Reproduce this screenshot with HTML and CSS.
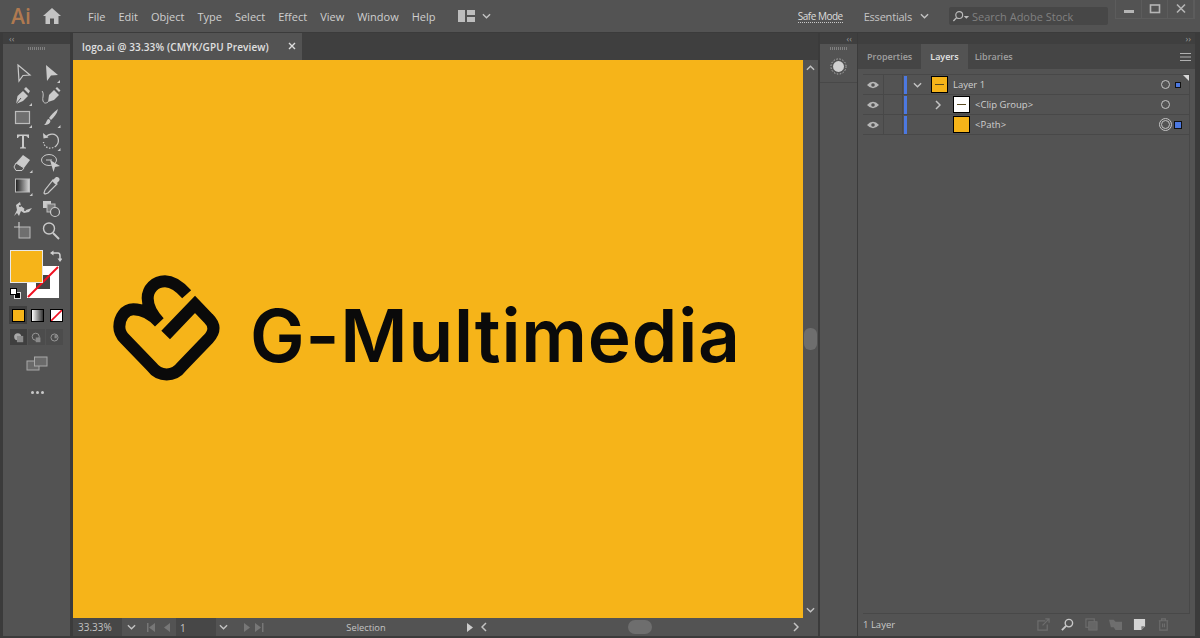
FILE: index.html
```html
<!DOCTYPE html>
<html lang="en">
<head>
  <meta charset="UTF-8" />
  <title>logo.ai @ 33.33% (CMYK/GPU Preview)</title>
  <link rel="stylesheet" href="styles.css">
</head>
<body>

  <header class="menubar">
    <span class="app-logo">Ai</span>
    <svg class="home-icon" viewBox="0 0 18 16"><path d="M9 0 L18 8 L15.5 8 L15.5 16 L11 16 L11 10.5 L7 10.5 L7 16 L2.5 16 L2.5 8 L0 8 Z" fill="#c4c4c4"/></svg>
    <nav class="menu">
      <span>File</span><span>Edit</span><span>Object</span><span>Type</span><span>Select</span><span>Effect</span><span>View</span><span>Window</span><span>Help</span>
    </nav>
    <svg class="arrange-icon" viewBox="0 0 17 12"><path d="M0 0H7V12H0ZM9 0H17V5H9ZM9 7H17V12H9Z" fill="#bdbdbd"/></svg>
    <svg class="chev chev-arrange" viewBox="0 0 10 6"><path d="M1 1 L5 5 L9 1" /></svg>
    <span class="spacer"></span>
    <span class="safe-mode">Safe Mode</span>
    <span class="essentials">Essentials</span>
    <svg class="chev chev-ess" viewBox="0 0 10 6"><path d="M1 1 L5 5 L9 1" /></svg>
    <div class="search">
      <svg viewBox="0 0 20 12" class="search-icon"><circle cx="8" cy="5" r="3.8" fill="none" stroke="#bbb" stroke-width="1.3"/><path d="M5 8 L1.5 11.5" stroke="#bbb" stroke-width="1.5"/><path d="M13 6H19L16 9Z" fill="#bbb"/></svg>
      <span>Search Adobe Stock</span>
    </div>
    <div class="win-btns">
      <span class="win-btn"><svg viewBox="0 0 12 12"><rect x="1" y="7" width="10" height="3" fill="#b5b5b5"/></svg></span>
      <span class="win-btn"><svg viewBox="0 0 12 12"><rect x="1.5" y="2" width="9" height="7.5" fill="none" stroke="#b5b5b5" stroke-width="1.6"/></svg></span>
      <span class="win-btn"><svg viewBox="0 0 12 12"><path d="M2 1.5 L10 9.5 M10 1.5 L2 9.5" stroke="#b5b5b5" stroke-width="1.6"/></svg></span>
    </div>
  </header>

  <div class="workspace">

    <aside class="toolbar">
      <div class="strip"><span class="arrows">‹‹</span></div>
      <div class="grip"></div>
      <div class="tools">
        <svg viewBox="0 0 22 22"><path d="M6 3 L18 13 L11 13.5 L7 19 Z" fill="none" stroke="#c8c8c8" stroke-width="1.2"/></svg>
        <svg viewBox="0 0 22 22"><path d="M6 3 L18 13 L11 13.5 L7 19 Z" fill="#cacaca"/><path d="M20 18V21H17Z" fill="#c8c8c8"/></svg>
        <svg viewBox="0 0 22 22"><path d="M4 19 L5.5 11 L11 6 L16 11 L11 16 Z" fill="#cacaca"/><path d="M12 4 L14 2 L18 6 L16.5 8.500Z" fill="#cacaca"/><path d="M4 19 L9 13" stroke="#555" stroke-width="1"/><path d="M20 18V21H17Z" fill="#c8c8c8"/></svg>
        <svg viewBox="0 0 22 22"><path d="M8 17 L9 10 L14 5 L19 10 L14 15 Z" fill="#cacaca"/><path d="M15.500 3.500 L17 2 L20.500 5.500 L19 7Z" fill="#cacaca"/><path d="M8 17 C4 20 2 16 3 12 C3.500 9 3 7 2 6" fill="none" stroke="#c8c8c8" stroke-width="1"/></svg>
        <svg viewBox="0 0 22 22"><rect x="3.500" y="4.500" width="14" height="12" fill="#6f6f6f" stroke="#bcbcbc" stroke-width="1.200"/><path d="M20 18V21H17Z" fill="#c8c8c8"/></svg>
        <svg viewBox="0 0 22 22"><path d="M18 2 C17 7 14 10 11 13 L9 11 C11 8 14 5 18 2Z" fill="#cacaca"/><path d="M8 12 C10 12 11 14 10 15.500 C9 17.500 6 18 4 18 C6 17 6 14 8 12Z" fill="#cacaca"/><path d="M20.500 18V21H17.500Z" fill="#c8c8c8"/></svg>
        <svg viewBox="0 0 22 22"><path d="M5 8 V4.500 H17 V8 H16 Q15.500 6 13.500 6 H12 V16.500 Q12 17.500 14 17.500 V18.500 H8 V17.500 Q10 17.500 10 16.500 V6 H8.500 Q6.500 6 6 8Z" fill="#cacaca"/></svg>
        <svg viewBox="0 0 22 22"><path d="M6 7 C9 3 16 3 18 8 C19 11 18 14 16 16" fill="none" stroke="#c8c8c8" stroke-width="1.300"/><path d="M16 16 C12 19 7 19 4.500 15 C4 14 3.500 13 3.500 12" fill="none" stroke="#c8c8c8" stroke-width="1.300" stroke-dasharray="1.500 1.500"/><path d="M3 3 L3.500 8.500 L8.500 7.500Z" fill="#cacaca"/><path d="M20.500 18V21H17.500Z" fill="#c8c8c8"/></svg>
        <svg viewBox="0 0 22 22"><path d="M11 3 L18 8 L12 16 L4 11Z" fill="#cacaca"/><path d="M4 11 L12 16 L10 18.500 L4 18.500 L2 15Z" fill="none" stroke="#cacaca" stroke-width="1"/><path d="M20.500 18V21H17.500Z" fill="#c8c8c8"/></svg>
        <svg viewBox="0 0 22 22"><ellipse cx="9" cy="8" rx="7.500" ry="5.500" fill="none" stroke="#c8c8c8" stroke-width="1"/><path d="M6 8 H12" stroke="#c8c8c8" stroke-width="1"/><path d="M10 8 L20 14 L15 15 L13.500 20Z" fill="#cacaca"/></svg>
        <svg viewBox="0 0 22 22"><defs><linearGradient id="gradTool"><stop offset="0" stop-color="#1c1c1c"/><stop offset="1" stop-color="#d8d8d8"/></linearGradient></defs><rect x="3.500" y="4" width="14" height="13" fill="url(#gradTool)" stroke="#bcbcbc"/><path d="M20.500 18V21H17.500Z" fill="#c8c8c8"/></svg>
        <svg viewBox="0 0 22 22"><path d="M13 5 L17 9 L8 18 L5 19 L4 18 L5 15Z" fill="none" stroke="#c8c8c8" stroke-width="1.200"/><path d="M12 6 L16 2 Q18 1.500 19 3 Q20.500 5 18 7 L15.500 9.500 Z" fill="#cacaca"/></svg>
        <svg viewBox="0 0 22 22"><path d="M2 19 L5 13 L4 8 L8 5 L9 9 L14 13 L20 11 L17 15 L12 16 L9 14 L7 19 L5 16Z" fill="#cacaca"/><circle cx="8" cy="9" r="1.100" fill="#535353"/><circle cx="13" cy="13" r="1.100" fill="#535353"/></svg>
        <svg viewBox="0 0 22 22"><rect x="3" y="4" width="8" height="7" fill="#cacaca"/><rect x="7" y="7" width="8" height="8" fill="#7a7a7a" stroke="#bcbcbc"/><circle cx="15" cy="15" r="4.500" fill="#535353" stroke="#cacaca" stroke-width="1.200"/></svg>
        <svg viewBox="0 0 22 22"><rect x="7" y="7" width="11" height="11" fill="#6f6f6f" stroke="#bcbcbc"/><path d="M2 7 H7 V2" fill="none" stroke="#c8c8c8" stroke-width="1.200"/></svg>
        <svg viewBox="0 0 22 22"><circle cx="9" cy="8.500" r="5.500" fill="none" stroke="#cacaca" stroke-width="1.400"/><path d="M13 13 L19 19" stroke="#cacaca" stroke-width="2"/></svg>
      </div>

      <div class="color-well">
        <span class="fill-swatch"></span>
        <span class="stroke-swatch">
          <svg viewBox="0 0 32 32"><path d="M1 31 L31 1" stroke="#f01020" stroke-width="2"/></svg>
        </span>
        <svg class="swap" viewBox="0 0 12 12"><path d="M2 3 H8 Q10 3 10 6 V10" fill="none" stroke="#cfcfcf" stroke-width="1.500"/><path d="M0 3 L3.500 0.500 V5.500Z M10 12 L7.500 8.500 H12.500Z" fill="#cfcfcf"/></svg>
        <span class="default-colors"><i></i><b></b></span>
      </div>

      <div class="mode-row">
        <span class="mode-box mode-on"><i class="m-fill"></i></span>
        <span class="mode-box"><i class="m-grad"></i></span>
        <span class="mode-box"><i class="m-none"><svg viewBox="0 0 11 11"><path d="M0 11 L11 0" stroke="#f01020" stroke-width="1.600"/></svg></i></span>
      </div>

      <div class="draw-row">
        <span class="draw-box draw-on"><svg viewBox="0 0 14 14"><circle cx="6" cy="6" r="4.500" fill="#a8a8a8"/><rect x="5" y="5" width="8" height="8" fill="#8a8a8a"/></svg></span>
        <span class="draw-box"><svg viewBox="0 0 14 14"><circle cx="6" cy="6" r="4.500" fill="none" stroke="#9a9a9a" stroke-width="1.200"/><rect x="6" y="7" width="6" height="6" fill="#8a8a8a"/></svg></span>
        <span class="draw-box"><svg viewBox="0 0 14 14"><circle cx="7" cy="7" r="4.500" fill="none" stroke="#9a9a9a" stroke-width="1.200"/><rect x="7" y="4" width="3" height="4" fill="#8a8a8a"/></svg></span>
      </div>

      <svg class="screen-mode" viewBox="0 0 22 15"><rect x="1" y="5" width="12" height="9" fill="#6a6a6a" stroke="#a9a9a9"/><rect x="8.500" y="1" width="12.500" height="9" fill="#6a6a6a" stroke="#a9a9a9"/></svg>
      <div class="more-dots"><i></i><i></i><i></i></div>
    </aside>

    <main class="document">
      <div class="tabs">
        <div class="tab">
          <span>logo.ai @ 33.33% (CMYK/GPU Preview)</span>
          <svg viewBox="0 0 8 8"><path d="M1 1 L7 7 M7 1 L1 7" stroke="#ddd" stroke-width="1.400"/></svg>
        </div>
      </div>

      <div class="canvas-row">
        <div class="canvas">
          <svg class="logo-mark" viewBox="0 0 420 375">
            <path d="M260 88 C235 60 215 49 195 49 C165 49 143 72 143 100 C143 125 155 148 178 172 C155 148 130 133 100 133 C75 133 58 158 58 185 C58 200 65 212 75 222 L155 305 C178 336 222 336 245 305 L325 222 C345 200 345 180 325 160 L285 118 L197 210" fill="none" stroke="#0a0a0a" stroke-width="36"/>
          </svg>
          <span class="logo-text">G-Multimedia</span>
        </div>
        <div class="v-scroll">
          <svg class="chev" viewBox="0 0 10 6"><path d="M1 5 L5 1 L9 5" /></svg>
          <span class="v-thumb"></span>
          <svg class="chev" viewBox="0 0 10 6"><path d="M1 1 L5 5 L9 1" /></svg>
        </div>
      </div>

      <div class="statusbar">
        <span class="zoom-field">33.33%</span>
        <svg class="chev st-chev" viewBox="0 0 10 6"><path d="M1 1 L5 5 L9 1" /></svg>
        <svg class="nav-icons" viewBox="0 0 26 9"><path d="M1 0V9H2.500V0ZM9 0V9L3 4.500ZM24 0V9L18 4.500Z" fill="#777"/></svg>
        <span class="page-field">1</span>
        <svg class="chev st-chev-page" viewBox="0 0 10 6"><path d="M1 1 L5 5 L9 1" /></svg>
        <svg class="nav-next" viewBox="0 0 22 9"><path d="M1 0V9L7 4.500ZM12 0V9L18 4.500ZM19 0V9H20.500V0Z" fill="#777"/></svg>
        <span class="status-label">Selection</span>
        <svg class="status-play" viewBox="0 0 6 9"><path d="M0 0V9L6 4.500Z" fill="#ccc"/></svg>
        <div class="h-scroll">
          <svg class="side-chev" viewBox="0 0 6 10"><path d="M5 1 L1 5 L5 9" /></svg>
          <span class="h-thumb"></span>
          <svg class="side-chev" viewBox="0 0 6 10"><path d="M1 1 L5 5 L1 9" /></svg>
        </div>
      </div>
    </main>

    <aside class="dock">
      <div class="strip"><span class="arrows">‹‹</span></div>
      <div class="grip"></div>
      <div class="dock-btn">
        <svg viewBox="0 0 18 18"><circle cx="9" cy="9" r="5.800" fill="#cfcfcf"/><circle cx="9" cy="9" r="8" fill="none" stroke="#bdbdbd" stroke-width="1" stroke-dasharray="1.500 1.700"/></svg>
      </div>
    </aside>

    <section class="panel">
      <div class="strip strip-right"><span class="arrows">››</span></div>
      <div class="panel-tabs">
        <span class="ptab">Properties</span>
        <span class="ptab ptab-on">Layers</span>
        <span class="ptab">Libraries</span>
        <span class="spacer"></span>
        <svg class="panel-menu" viewBox="0 0 11 8"><path d="M0 .5H11M0 4H11M0 7.500H11" stroke="#b0b0b0" stroke-width="1"/></svg>
      </div>

      <div class="layers">
        <span class="corner"></span>
        <div class="layer">
          <svg class="eye" viewBox="0 0 12 8"><path d="M0 4 Q6 -2.500 12 4 Q6 10.500 0 4Z" fill="#b8b8b8"/><circle cx="6" cy="4" r="1.800" fill="#535353"/></svg>
          <span class="lock"></span>
          <span class="bar"></span>
          <svg class="twist" viewBox="0 0 10 6"><path d="M1 1 L5 5 L9 1" /></svg>
          <span class="thumb thumb-yellow"><i></i></span>
          <span class="layer-name">Layer 1</span>
          <span class="target"></span>
          <span class="sel"></span>
        </div>
        <div class="layer">
          <svg class="eye" viewBox="0 0 12 8"><path d="M0 4 Q6 -2.500 12 4 Q6 10.500 0 4Z" fill="#b8b8b8"/><circle cx="6" cy="4" r="1.800" fill="#535353"/></svg>
          <span class="lock"></span>
          <span class="bar"></span>
          <span class="indent"></span>
          <svg class="twist twist-side" viewBox="0 0 6 10"><path d="M1 1 L5 5 L1 9" /></svg>
          <span class="thumb thumb-white"><i></i></span>
          <span class="layer-name">&lt;Clip Group&gt;</span>
          <span class="target"></span>
          <span class="sel sel-empty"></span>
        </div>
        <div class="layer">
          <svg class="eye" viewBox="0 0 12 8"><path d="M0 4 Q6 -2.500 12 4 Q6 10.500 0 4Z" fill="#b8b8b8"/><circle cx="6" cy="4" r="1.800" fill="#535353"/></svg>
          <span class="lock"></span>
          <span class="bar"></span>
          <span class="indent indent-path"></span>
          <span class="thumb thumb-yellow"></span>
          <span class="layer-name">&lt;Path&gt;</span>
          <span class="target target-double"></span>
          <span class="sel sel-big"></span>
        </div>
      </div>

      <div class="panel-footer">
        <span>1 Layer</span>
        <span class="spacer"></span>
        <svg class="foot-icon" viewBox="0 0 14 14"><path d="M9 3H1V13H11V7" fill="none" stroke="#6e6e6e" stroke-width="1.300"/><path d="M6 8 L13 1 M9 1H13V5" fill="none" stroke="#6e6e6e" stroke-width="1.300"/></svg>
        <svg class="foot-icon" viewBox="0 0 14 14"><circle cx="8.500" cy="5.500" r="4" fill="none" stroke="#c8c8c8" stroke-width="1.500"/><path d="M5.500 8.500 L1 13" stroke="#c8c8c8" stroke-width="2"/></svg>
        <svg class="foot-icon" viewBox="0 0 14 14"><rect x="1" y="1" width="9" height="9" fill="none" stroke="#6e6e6e" stroke-width="1.200"/><rect x="4" y="4" width="9" height="9" fill="#666" stroke="#6e6e6e"/></svg>
        <svg class="foot-icon" viewBox="0 0 14 14"><path d="M0 2H5L7 4H14V13H7L5 10H2Z" fill="#6e6e6e"/></svg>
        <svg class="foot-icon" viewBox="0 0 14 14"><path d="M1 1H13V9L9 13H1Z" fill="#d4d4d4"/><path d="M9 13V9H13Z" fill="#7a7a7a"/></svg>
        <svg class="foot-icon" viewBox="0 0 14 14"><path d="M2 3H12M5 3V1H9V3M3 3V13H11V3M6 6V10M8 6V10" fill="none" stroke="#6e6e6e" stroke-width="1.200"/></svg>
      </div>
    </section>
  </div>

</body>
</html>
```

FILE: styles.css
```css
* {
  box-sizing: border-box;
}

html, body {
  margin: 0;
  height: 100%;
}

body {
  width: 1200px;
  height: 638px;
  overflow: hidden;
  background: #3b3b3b;
  color: #cfcfcf;
  font-family: "Open Sans", Arial, sans-serif;
  font-size: 11px;
  display: flex;
  flex-direction: column;
}

svg {
  display: block;
  flex: none;
}

.spacer {
  flex: 1;
}

.chev path,
.twist path,
.side-chev path {
  fill: none;
  stroke: #c4c4c4;
  stroke-width: 1.500;
}

/* top bar */
.menubar {
  height: 32px;
  flex: none;
  background: #535353;
  display: flex;
  align-items: center;
  padding-left: 11px;
}

.app-logo {
  width: 20px;
  font-size: 21px;
  font-weight: 600;
  color: #b07a50;
  line-height: 1;
}

.home-icon {
  width: 18px;
  height: 16px;
  margin-left: 12px;
}

.menu {
  display: flex;
  gap: 13px;
  margin-left: 27px;
  font-size: 11px;
}

.arrange-icon {
  width: 17px;
  height: 12px;
  margin-left: 22px;
}

.chev {
  width: 9px;
  height: 6px;
}

.chev-arrange {
  margin-left: 7px;
}

.safe-mode {
  font-size: 10px;
  border-bottom: 1px dotted #c8c8c8;
  line-height: 12px;
  letter-spacing: -.5px;
  color: #ddd;
}

.essentials {
  margin-left: 21px;
  letter-spacing: -.2px;
  color: #c4c4c4;
}

.chev-ess {
  margin-left: 8px;
}

.search {
  width: 159px;
  height: 18px;
  margin-left: 20px;
  background: #474747;
  border-radius: 2px;
  display: flex;
  align-items: center;
  gap: 2px;
  padding-left: 3px;
  color: #808080;
}

.search-icon {
  width: 18px;
  height: 12px;
}

.win-btns {
  display: flex;
  margin: 0 5px 0 7px;
  align-self: flex-start;
  border: 1px solid #5c5c5c;
  border-top: 0;
}

.win-btn {
  width: 26px;
  height: 18px;
  display: flex;
  align-items: center;
  justify-content: center;
  border-right: 1px solid #5c5c5c;
}

.win-btn svg {
  width: 12px;
  height: 12px;
}

/* shared dark strip over side panels */
.workspace {
  flex: 1;
  min-height: 0;
  display: flex;
  padding: 1px 5px 2px 3px;
}

.strip {
  height: 11px;
  flex: none;
  background: #3f3f3f;
  display: flex;
  align-items: center;
  padding-left: 6px;
}

.arrows {
  font-size: 9px;
  line-height: 9px;
  color: #9a9a9a;
  letter-spacing: 0;
}

.strip-right {
  justify-content: flex-end;
  padding-right: 4px;
}

.grip {
  height: 3px;
  margin: 3px auto 0;
  width: 18px;
  background: repeating-linear-gradient(90deg, #808080 0 1px, transparent 1px 2px);
}

/* left tools */
.toolbar {
  width: 67px;
  flex: none;
  background: #535353;
  display: flex;
  flex-direction: column;
}

.tools {
  display: grid;
  grid-template-columns: 28px 28px;
  grid-auto-rows: 22.500px;
  justify-content: center;
  justify-items: center;
  margin-top: 12px;
}

.tools svg {
  width: 22px;
  height: 22px;
}

.color-well {
  position: relative;
  height: 50px;
  margin-top: 8px;
}

.fill-swatch {
  position: absolute;
  left: 7px;
  top: 0;
  width: 33px;
  height: 33px;
  background: #f6b419;
  border: 1px solid #e8e8e8;
  z-index: 2;
}

.stroke-swatch {
  position: absolute;
  left: 24px;
  top: 16px;
  width: 32px;
  height: 32px;
  border: 9px solid #fff;
  background: #444;
  z-index: 1;
}

.stroke-swatch svg {
  position: absolute;
  left: -9px;
  top: -9px;
  width: 32px;
  height: 32px;
}

.swap {
  position: absolute;
  left: 47px;
  top: 0;
  width: 12px;
  height: 12px;
}

.default-colors {
  position: absolute;
  left: 7px;
  top: 38px;
  width: 11px;
  height: 11px;
}

.default-colors i,
.default-colors b {
  position: absolute;
  width: 7px;
  height: 7px;
  border: 1px solid #ddd;
}

.default-colors i {
  right: 0;
  bottom: 0;
  background: #000;
}

.default-colors b {
  left: 0;
  top: 0;
  background: #fff;
  border-color: #000;
}

.mode-row {
  display: flex;
  gap: 1px;
  margin: 6px 0 0 6px;
}

.mode-box {
  width: 18px;
  height: 18px;
  display: flex;
  align-items: center;
  justify-content: center;
}

.mode-on {
  background: #3f3f3f;
}

.mode-box i {
  display: block;
  width: 13px;
  height: 13px;
  border: 1px solid #000;
}

.m-fill {
  background: #f6b419;
}

.m-grad {
  background: linear-gradient(90deg, #fff, #333);
}

.m-none {
  background: #fff;
}

.m-none svg {
  width: 11px;
  height: 11px;
}

.draw-row {
  display: flex;
  gap: 1px;
  margin: 5px 0 0 7px;
}

.draw-box {
  width: 17px;
  height: 16px;
  background: #4c4c4c;
  display: flex;
  align-items: center;
  justify-content: center;
}

.draw-on {
  background: #3f3f3f;
}

.draw-box svg {
  width: 11px;
  height: 11px;
}

.screen-mode {
  width: 22px;
  height: 15px;
  margin: 11px 0 0 23px;
}

.more-dots {
  display: flex;
  gap: 2px;
  margin: 20px 0 0 28px;
}

.more-dots i {
  width: 3px;
  height: 3px;
  border-radius: 50%;
  background: #c8c8c8;
}

/* document */
.document {
  width: 745px;
  flex: none;
  margin-left: 3px;
  display: flex;
  flex-direction: column;
}

.tabs {
  height: 27px;
  flex: none;
  background: #3f3f3f;
}

.tab {
  width: 229px;
  height: 27px;
  background: #535353;
  display: flex;
  align-items: center;
  justify-content: space-between;
  padding: 0 6px 0 9px;
  font-size: 10px;
  font-weight: 600;
  letter-spacing: .12px;
  color: #e0e0e0;
}

.tab svg {
  width: 8px;
  height: 8px;
  margin-top: -2px;
}

.canvas-row {
  flex: 1;
  min-height: 0;
  display: flex;
}

.canvas {
  width: 730px;
  background: #f6b419;
  position: relative;
  display: flex;
  align-items: flex-start;
  padding: 205px 0 0 27px;
}

.logo-mark {
  width: 140px;
  height: 125px;
}

.logo-text {
  margin: 27px 0 0 10px;
  font-family: Inter, Arial, sans-serif;
  font-size: 73px;
  font-weight: 600;
  letter-spacing: .8px;
  line-height: 88px;
  color: #0a0a0a;
  white-space: nowrap;
}

.v-scroll {
  width: 15px;
  background: #535353;
  display: flex;
  flex-direction: column;
  align-items: center;
  justify-content: space-between;
  padding: 5px 0;
}

.v-thumb {
  width: 13px;
  height: 22px;
  border-radius: 6px;
  background: #6e6e6e;
}

.statusbar {
  height: 18px;
  flex: none;
  background: #535353;
  display: flex;
  align-items: center;
  padding-right: 19px;
  color: #c4c4c4;
}

.zoom-field {
  width: 49px;
  height: 18px;
  line-height: 18px;
  padding-left: 5px;
  background: #474747;
  font-size: 10px;
}

.st-chev {
  margin-left: 5px;
}

.nav-icons {
  width: 26px;
  height: 9px;
  margin-left: 10px;
}

.page-field {
  width: 40px;
  height: 18px;
  line-height: 20px;
  margin-left: 4px;
  padding-left: 4px;
  background: #474747;
  font-size: 10px;
}

.st-chev-page {
  margin-left: 3px;
}

.nav-next {
  width: 22px;
  height: 9px;
  margin-left: 15px;
}

.status-label {
  flex: 1;
  margin-left: 1px;
  text-align: center;
  font-size: 9.300px;
}

.status-play {
  width: 6px;
  height: 9px;
  margin-left: 1px;
}

.h-scroll {
  width: 318px;
  flex: none;
  margin-left: 8px;
  display: flex;
  align-items: center;
  justify-content: space-between;
}

.h-thumb {
  width: 24px;
  height: 14px;
  border-radius: 7px;
  background: #6e6e6e;
}

.side-chev {
  width: 6px;
  height: 10px;
}

/* dock */
.dock {
  width: 37px;
  flex: none;
  margin-left: 2px;
  background: #535353;
  display: flex;
  flex-direction: column;
}

.dock .strip {
  justify-content: flex-end;
  padding-right: 5px;
}

.dock-btn {
  height: 33px;
  border-bottom: 1px solid #484848;
  display: flex;
  align-items: center;
  justify-content: center;
}

.dock-btn svg {
  width: 17px;
  height: 17px;
}

/* layers panel */
.panel {
  width: 337px;
  flex: none;
  margin-left: 1px;
  background: #535353;
  display: flex;
  flex-direction: column;
}

.panel-tabs {
  height: 25px;
  flex: none;
  background: #454545;
  display: flex;
  align-items: stretch;
  font-size: 9px;
  font-weight: 600;
  color: #a0a0a0;
}

.ptab {
  display: flex;
  align-items: center;
  padding: 0 9px;
}

.ptab-on {
  background: #535353;
  color: #e4e4e4;
}

.ptab-on + .ptab {
  padding-left: 7px;
}

.panel-menu {
  width: 11px;
  height: 8px;
  align-self: center;
  margin-right: 4px;
}

.layers {
  flex: 1;
  min-height: 0;
  position: relative;
  margin: 5px 5px 0;
  border-top: 1px solid #484848;
  border-right: 1px solid #484848;
  border-bottom: 1px solid #484848;
}

.corner {
  position: absolute;
  right: 0;
  top: 0;
  width: 0;
  height: 0;
  border-top: 6px solid #d8d8d8;
  border-left: 6px solid transparent;
}

.layer {
  height: 20px;
  display: flex;
  align-items: center;
  border-bottom: 1px solid #484848;
  font-size: 9.500px;
  color: #cfcfcf;
}

.eye {
  width: 12px;
  height: 8px;
  margin: 0 4px;
}

.lock {
  width: 20px;
  height: 19px;
  border-left: 1px solid #484848;
  border-right: 1px solid #484848;
}

.bar {
  width: 3px;
  height: 18px;
  margin-left: 1px;
  background: #4c78e0;
}

.twist {
  width: 9px;
  height: 6px;
  margin: 0 9px 0 6px;
}

.twist-side {
  width: 6px;
  height: 10px;
  margin: 0 12px 0 4px;
}

.indent {
  width: 24px;
}

.indent-path {
  width: 46px;
}

.thumb {
  width: 17px;
  height: 17px;
  border: 1px solid #000;
  display: flex;
  align-items: center;
  justify-content: center;
  flex: none;
}

.thumb-yellow {
  background: #f6b419;
}

.thumb-white {
  background: #fff;
}

.thumb i {
  width: 9px;
  height: 1px;
  background: #5a4a20;
}

.layer-name {
  flex: 1;
  margin-left: 5px;
}

.target {
  width: 9px;
  height: 9px;
  border: 1px solid #c4c4c4;
  border-radius: 50%;
  position: relative;
  margin-right: 5px;
}

.target-double {
  margin-right: 4px;
}

.target-double::after {
  content: "";
  position: absolute;
  inset: -3px;
  border: 1px solid #c4c4c4;
  border-radius: 50%;
}

.sel {
  width: 6px;
  height: 6px;
  margin-right: 8px;
  background: #4c78e0;
  border: 1px solid #111;
}

.sel-empty {
  background: none;
  border: 0;
}

.sel-big {
  width: 8px;
  height: 8px;
  margin-right: 7px;
}

.panel-footer {
  height: 22px;
  flex: none;
  display: flex;
  align-items: center;
  padding: 0 25px 2px 5px;
  gap: 11px;
  font-size: 9.500px;
  color: #c8c8c8;
}

.foot-icon {
  width: 13px;
  height: 13px;
}
```
